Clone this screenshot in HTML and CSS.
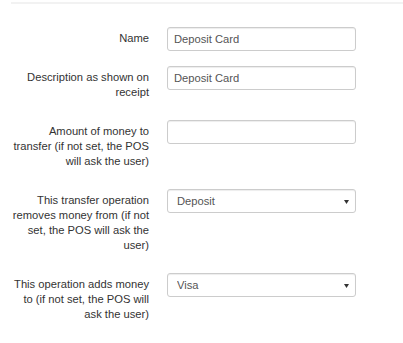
FILE: index.html
```html
<!DOCTYPE html>
<html lang="en">
<head>
  <meta charset="UTF-8" />
  <title>Transfer operation</title>
  <link rel="stylesheet" href="styles.css">
</head>
<body>
  <div class="top-rule"></div>

  <form class="form-horizontal">
    <div class="form-group">
      <label class="control-label" for="name">Name</label>
      <div class="control">
        <input class="form-control" id="name" type="text" value="Deposit Card">
      </div>
    </div>

    <div class="form-group">
      <label class="control-label" for="desc">Description as shown on receipt</label>
      <div class="control">
        <input class="form-control" id="desc" type="text" value="Deposit Card">
      </div>
    </div>

    <div class="form-group">
      <label class="control-label" for="amount">Amount of money to transfer (if not set, the POS will ask the user)</label>
      <div class="control">
        <input class="form-control" id="amount" type="text" value="">
      </div>
    </div>

    <div class="form-group">
      <label class="control-label" for="from">This transfer operation removes money from (if not set, the POS will ask the user)</label>
      <div class="control select-wrap">
        <select class="form-control" id="from">
          <option>Deposit</option>
        </select>
        <svg class="caret" width="5" height="4" viewBox="0 0 5 4"><path d="M0 0h5L2.5 4z" fill="#333"/></svg>
      </div>
    </div>

    <div class="form-group">
      <label class="control-label" for="to">This operation adds money to (if not set, the POS will ask the user)</label>
      <div class="control select-wrap">
        <select class="form-control" id="to">
          <option>Visa</option>
        </select>
        <svg class="caret" width="5" height="4" viewBox="0 0 5 4"><path d="M0 0h5L2.5 4z" fill="#333"/></svg>
      </div>
    </div>
  </form>
</body>
</html>
```

FILE: styles.css
```css
* {
  margin: 0;
  padding: 0;
  box-sizing: border-box;
}

body {
  font-family: "Liberation Sans", Arial, sans-serif;
  font-size: 11.2px;
  color: #333;
  background: #fff;
}

.top-rule {
  margin: 2px 0 0 11px;
  height: 2px;
  background-color: #f2f2f2;
}

.form-horizontal {
  padding-top: 23px;
}

.form-group {
  display: flex;
  align-items: flex-start;
  margin-bottom: 12px;
}

.control-label {
  width: 140px;
  margin-left: 9px;
  padding: 4px 0 8px;
  text-align: right;
  line-height: 15px;
}

.control {
  width: 189px;
  margin-left: 18px;
}

.form-control {
  display: block;
  width: 100%;
  height: 24px;
  padding: 0 6px;
  font-family: inherit;
  font-size: 11.2px;
  color: #555;
  background-color: #fff;
  border: 1px solid #ccc;
  border-radius: 3px;
  box-shadow: inset 0 1px 1px rgba(0, 0, 0, 0.075);
  outline: none;
}

.select-wrap {
  position: relative;
}

select.form-control {
  appearance: none;
  -webkit-appearance: none;
  padding-left: 9px;
}

.caret {
  position: absolute;
  right: 7px;
  top: 11px;
  pointer-events: none;
}
```
